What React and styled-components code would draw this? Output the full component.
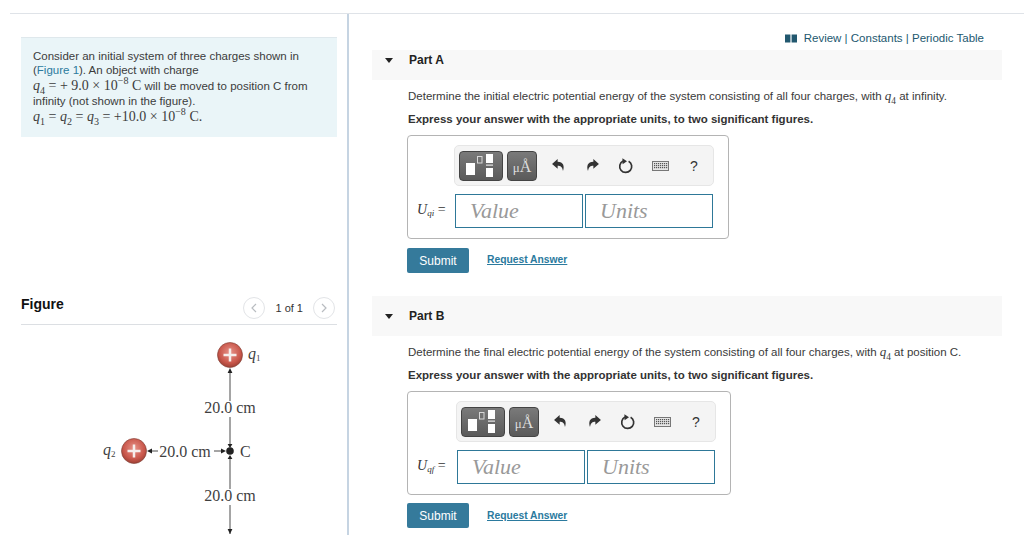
import React from "react";
import styled, { createGlobalStyle } from "styled-components";

const GlobalStyle = createGlobalStyle`
    html, body {
        margin: 0;
        padding: 0;
        height: 535px;
        overflow: hidden;
        background: #fff;
    }
    body {
        font-family: "Liberation Sans", Arial, sans-serif;
        color: #333;
    }
`;

const Page = styled.div`
    width: 1014px;
    height: 522px;
    margin: 13px 0 0 10px;
    border-top: 1px solid #dfe3e8;
    display: flex;
    overflow: hidden;
`;

const LeftColumn = styled.aside`
    width: 316px;
    padding: 23px 10px 0 11px;
    border-right: 2px solid #c6d4e2;
    flex-shrink: 0;
`;

const RightColumn = styled.main`
    flex: 1;
    padding: 17px 22px 0 23px;
    min-width: 0;
`;

const Intro = styled.div`
    height: 100px;
    box-sizing: border-box;
    background: #eaf5f8;
    border-top: 1px solid #dfe8ec;
    padding: 11px 12px 0;
    font-size: 11.5px;
    color: #3c3c3c;
`;

const IntroLine = styled.div`
    height: ${(p) => p.$h}px;
    line-height: ${(p) => p.$h}px;
    white-space: nowrap;
`;

const FigureLink = styled.span`
    color: #2b7a9e;
`;

const Math = styled.span`
    font-family: "Liberation Serif", "Times New Roman", serif;
    font-size: ${(p) => p.$size || 14}px;
    color: #3c3c3c;

    i {
        font-style: italic;
    }
    sub, sup {
        font-size: 0.72em;
        line-height: 0;
    }
`;

const FigureHead = styled.div`
    height: 44px;
    margin-top: 144px;
    box-sizing: border-box;
    border-bottom: 1px solid #dcdfe3;
    display: flex;
    align-items: flex-start;
    justify-content: space-between;
`;

const FigureTitle = styled.h3`
    margin: 14px 0 0;
    font-size: 14px;
    line-height: 18px;
    font-weight: 700;
    color: #111;
`;

const Pager = styled.div`
    display: flex;
    align-items: center;
    gap: 10px;
    margin: 16px 2px 0 0;
    font-size: 11px;
    color: #333;
`;

const PagerButton = styled.span`
    width: 22px;
    height: 22px;
    box-sizing: border-box;
    border: 1px solid #e2e4e7;
    border-radius: 50%;
    display: flex;
    align-items: center;
    justify-content: center;
`;

const FigureSvg = styled.svg`
    display: block;
    width: 316px;
    height: 209px;
`;

const ResourceBar = styled.div`
    height: 14px;
    display: flex;
    align-items: center;
    justify-content: flex-end;
    gap: 7px;
    padding-right: 18px;
    font-size: 11.5px;
    color: #22586f;
`;

const PartSection = styled.section`
    margin-top: ${(p) => p.$top}px;
`;

const PartHeader = styled.div`
    height: ${(p) => p.$h}px;
    background: #f8f8f8;
    display: flex;
    align-items: ${(p) => (p.$center ? "center" : "flex-start")};
    gap: 16px;
    padding-left: 13px;
    font-size: 12px;
    font-weight: 700;
    color: #222;
`;

const PartLabel = styled.span`
    line-height: 20px;
`;

const Caret = styled.span`
    width: 0;
    height: 0;
    margin-top: ${(p) => (p.$center ? 0 : 8)}px;
    border-left: 4.5px solid transparent;
    border-right: 4.5px solid transparent;
    border-top: 5px solid #222;
`;

const PartBody = styled.div`
    padding-left: 35px;
`;

const Question = styled.p`
    margin: 8px 0 0;
    padding-left: 1px;
    height: 15px;
    line-height: 15px;
    font-size: 11.5px;
    color: #3a3a3a;
    white-space: nowrap;
`;

const Instruction = styled.p`
    margin: 9px 0 0;
    padding-left: 1px;
    height: 15px;
    line-height: 15px;
    font-size: 11.5px;
    font-weight: 700;
    color: #333;
    white-space: nowrap;
`;

const AnswerBox = styled.div`
    width: fit-content;
    margin-top: 8px;
    padding: 9px 14px 10px 9px;
    border: 1px solid #b4b4b4;
    border-radius: 4px;
`;

const Toolbar = styled.div`
    margin-left: ${(p) => p.$indent}px;
    width: 260px;
    height: 41px;
    box-sizing: border-box;
    padding: 4px 4px;
    background: #f4f4f4;
    border: 1px solid #e6e6e6;
    border-radius: 5px;
    display: flex;
    align-items: center;
`;

const DarkButton = styled.span`
    width: ${(p) => p.$w}px;
    height: 30px;
    margin-right: 4px;
    flex-shrink: 0;
    box-sizing: border-box;
    border: 1px solid #444;
    border-radius: 4px;
    background: linear-gradient(#7a7a7a, #5a5a5a);
    display: flex;
    align-items: baseline;
    justify-content: center;
    color: #dedede;
    font-family: "Liberation Serif", serif;
    line-height: 29px;
`;

const UnitGlyph = styled.span`
    font-size: ${(p) => p.$size}px;
`;

const ToolIcon = styled.span`
    width: 34px;
    height: 30px;
    flex-shrink: 0;
    display: flex;
    align-items: center;
    justify-content: center;
    color: #333;
    font-size: 14px;
`;

const InputRow = styled.div`
    display: flex;
    align-items: center;
    margin-top: 8px;
    gap: 2px;
`;

const SymbolLabel = styled.span`
    width: ${(p) => p.$w}px;
    flex-shrink: 0;
    font-family: "Liberation Serif", serif;
    font-size: 14px;
    color: #333;
    white-space: nowrap;
    padding-bottom: 2px;

    sub {
        font-size: 9px;
        line-height: 0;
        vertical-align: -2px;
    }
`;

const FakeInput = styled.div`
    width: 128px;
    height: 34px;
    box-sizing: border-box;
    border: 1px solid #2e7898;
    padding-left: 14px;
    line-height: 32px;
    font-family: "Liberation Serif", serif;
    font-style: italic;
    font-size: 22px;
    color: #999;
`;

const ActionRow = styled.div`
    display: flex;
    align-items: center;
    gap: 18px;
    margin-top: ${(p) => p.$gap}px;
`;

const SubmitButton = styled.button`
    width: 62px;
    height: 25px;
    padding: 0;
    border: none;
    border-radius: 2px;
    background: #357a9b;
    color: #fff;
    font-family: inherit;
    font-size: 12px;
`;

const RequestLink = styled.a`
    font-size: 10.3px;
    font-weight: 700;
    color: #2b7a9e;
    text-decoration: underline;
    margin-bottom: ${(p) => p.$lift}px;
`;

function BookIcon() {
    return (
        <svg width="12" height="9" viewBox="0 0 12 9">
            <path d="M0 0.5h5.4v8H0zM6.6 0.5H12v8H6.6z" fill="#22586f" />
        </svg>
    );
}

function Chevron({ dir }) {
    const d = dir === "left" ? "M6 1 2 5l4 4" : "M2 1l4 4-4 4";
    return (
        <svg width="8" height="10" viewBox="0 0 8 10" fill="none" stroke="#b8bcc0" strokeWidth="1.2">
            <path d={d} />
        </svg>
    );
}

function TemplatesIcon() {
    return (
        <svg width="42" height="28" viewBox="1 1 42 28">
            <rect x="7" y="12" width="9" height="12" fill="#fff" />
            <rect x="18.5" y="5.5" width="4.5" height="6.5" fill="none" stroke="#d8d8d8" strokeWidth="1" />
            <rect x="27" y="3" width="7" height="9" fill="#fff" />
            <rect x="27" y="13.6" width="7" height="1" fill="#fff" />
            <rect x="27" y="17" width="7" height="9" fill="#fff" />
        </svg>
    );
}

function ArrowIcon({ flip }) {
    return (
        <svg width="15" height="15" viewBox="0 0 14 14" style={flip ? { transform: "scaleX(-1)" } : undefined}>
            <path d="M6.2 1 1 5.6l5.2 4.4V7.2c2.8 0 4.4 1.2 5 5 1.6-4.6 0.4-8.4-5-8.6z" fill="#333" />
        </svg>
    );
}

function ResetIcon() {
    return (
        <svg width="16" height="16" viewBox="0 0 16 16" fill="none">
            <path d="M10.6 3.2A6 6 0 1 1 5 3.1" stroke="#333" strokeWidth="1.7" />
            <path d="M4.4 0.2 9 3.2 4.6 6.2z" fill="#333" />
        </svg>
    );
}

function KeyboardIcon() {
    const keys = [];
    for (let row = 0; row < 3; row++) {
        for (let col = 0; col < 7; col++) {
            keys.push(<rect key={`${row}-${col}`} x={2 + col * 2} y={2 + row * 2} width="1.2" height="1.2" fill="#555" />);
        }
    }
    return (
        <svg width="17" height="10" viewBox="0 0 17 10">
            <rect x="0.5" y="0.5" width="16" height="9" fill="#e6e6e6" stroke="#777" />
            {keys}
        </svg>
    );
}

function Charge({ cx, cy, id }) {
    return (
        <g>
            <circle cx={cx} cy={cy} r="12.5" fill={`url(#${id})`} stroke="#7c3a30" strokeWidth="0.6" />
            <path d={`M${cx - 6.5} ${cy}h13M${cx} ${cy - 6.5}v13`} stroke="#f6eeec" strokeWidth="2.5" />
        </g>
    );
}

function ChargeFigure() {
    const serif = { fontFamily: "'Liberation Serif', serif", fill: "#3f3f3f" };
    return (
        <FigureSvg viewBox="21 326 316 209">
            <defs>
                <radialGradient id="ballA" cx="0.5" cy="0.4" r="0.6">
                    <stop offset="0" stopColor="#e8948a" />
                    <stop offset="0.7" stopColor="#c9574b" />
                    <stop offset="1" stopColor="#9d4035" />
                </radialGradient>
                <radialGradient id="ballB" cx="0.5" cy="0.4" r="0.6">
                    <stop offset="0" stopColor="#e8948a" />
                    <stop offset="0.7" stopColor="#c9574b" />
                    <stop offset="1" stopColor="#9d4035" />
                </radialGradient>
            </defs>
            <g stroke="#4a4a4a" strokeWidth="1" fill="none">
                <path d="M230 371V402M230 418V447M230 458V490M230 506V535" />
                <path d="M149 452h9M214 452h9" />
            </g>
            <g fill="#222">
                <path d="M230 369l-2.4 5h4.8z" />
                <path d="M230 449l-2.4-4h4.8z" />
                <path d="M230 456l-2.4 4h4.8z" />
                <path d="M230 535l-2.4-5h4.8z" />
                <path d="M147 452l5-2.4v4.8z" />
                <path d="M226 452l-5-2.4v4.8z" />
                <circle cx="230" cy="452" r="3.8" />
            </g>
            <Charge cx={230} cy={356} id="ballA" />
            <Charge cx={134} cy={452} id="ballB" />
            <text x="230" y="414" textAnchor="middle" fontSize="16" {...serif}>20.0 cm</text>
            <text x="230" y="502" textAnchor="middle" fontSize="16" {...serif}>20.0 cm</text>
            <text x="185" y="458" textAnchor="middle" fontSize="16" {...serif}>20.0 cm</text>
            <text x="240" y="458" fontSize="16" {...serif}>C</text>
            <text x="248" y="360" fontSize="16" fontStyle="italic" {...serif}>q<tspan fontSize="9" fontStyle="normal" dy="2">1</tspan></text>
            <text x="103" y="456" fontSize="16" fontStyle="italic" {...serif}>q<tspan fontSize="9" fontStyle="normal" dy="2">2</tspan></text>
        </FigureSvg>
    );
}

function AnswerForm({ symbol, labelWidth, indent }) {
    return (
        <AnswerBox>
            <Toolbar $indent={indent}>
                <DarkButton $w={44}><TemplatesIcon /></DarkButton>
                <DarkButton $w={30}><UnitGlyph $size={13}>μ</UnitGlyph><UnitGlyph $size={16}>Å</UnitGlyph></DarkButton>
                <ToolIcon><ArrowIcon /></ToolIcon>
                <ToolIcon><ArrowIcon flip /></ToolIcon>
                <ToolIcon><ResetIcon /></ToolIcon>
                <ToolIcon><KeyboardIcon /></ToolIcon>
                <ToolIcon>?</ToolIcon>
            </Toolbar>
            <InputRow>
                <SymbolLabel $w={labelWidth - 1}><i>U</i><sub><i>{symbol}</i></sub> =</SymbolLabel>
                <FakeInput>Value</FakeInput>
                <FakeInput>Units</FakeInput>
            </InputRow>
        </AnswerBox>
    );
}

function Part({ title, top, headerHeight, center, question, symbol, labelWidth, submitGap, linkLift }) {
    return (
        <PartSection $top={top}>
            <PartHeader $h={headerHeight} $center={center}>
                <Caret $center={center} />
                <PartLabel>{title}</PartLabel>
            </PartHeader>
            <PartBody>
                <Question>{question}</Question>
                <Instruction>Express your answer with the appropriate units, to two significant figures.</Instruction>
                <AnswerForm symbol={symbol} labelWidth={labelWidth} indent={labelWidth} />
                <ActionRow $gap={submitGap}>
                    <SubmitButton>Submit</SubmitButton>
                    <RequestLink $lift={linkLift}>Request Answer</RequestLink>
                </ActionRow>
            </PartBody>
        </PartSection>
    );
}

export default function App() {
    return (
        <>
            <GlobalStyle />
            <Page>
                <LeftColumn>
                    <Intro>
                        <IntroLine $h={14}>Consider an initial system of three charges shown in</IntroLine>
                        <IntroLine $h={14}>(<FigureLink>Figure 1</FigureLink>). An object with charge</IntroLine>
                        <IntroLine $h={18}>
                            <Math><i>q</i><sub>4</sub> = + 9.0 × 10<sup>−8</sup> C</Math> will be moved to position C from
                        </IntroLine>
                        <IntroLine $h={13}>infinity (not shown in the figure).</IntroLine>
                        <IntroLine $h={18}>
                            <Math><i>q</i><sub>1</sub> = <i>q</i><sub>2</sub> = <i>q</i><sub>3</sub> = +10.0 × 10<sup>−8</sup> C.</Math>
                        </IntroLine>
                    </Intro>
                    <FigureHead>
                        <FigureTitle>Figure</FigureTitle>
                        <Pager>
                            <PagerButton><Chevron dir="left" /></PagerButton>
                            <span>1 of 1</span>
                            <PagerButton><Chevron dir="right" /></PagerButton>
                        </Pager>
                    </FigureHead>
                    <ChargeFigure />
                </LeftColumn>
                <RightColumn>
                    <ResourceBar>
                        <BookIcon />
                        <span>Review | Constants | Periodic Table</span>
                    </ResourceBar>
                    <Part
                        title="Part A"
                        top={5}
                        headerHeight={30}
                        question={<>Determine the initial electric potential energy of the system consisting of all four charges, with <Math $size={13}><i>q</i><sub>4</sub></Math> at infinity.</>}
                        symbol="qi"
                        labelWidth={37}
                        submitGap={9}
                        linkLift={3}
                    />
                    <Part
                        title="Part B"
                        top={23}
                        headerHeight={40}
                        center
                        question={<>Determine the final electric potential energy of the system consisting of all four charges, with <Math $size={13}><i>q</i><sub>4</sub></Math> at position C.</>}
                        symbol="qf"
                        labelWidth={39}
                        submitGap={8}
                        linkLift={1}
                    />
                </RightColumn>
            </Page>
        </>
    );
}
